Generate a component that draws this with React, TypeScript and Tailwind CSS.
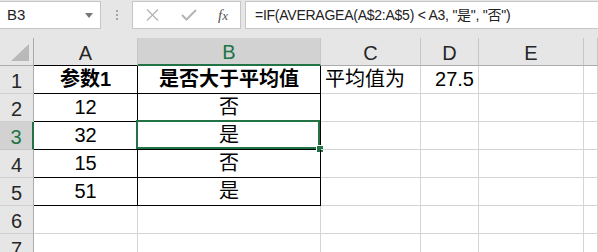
import React from 'react';

type Cell = { text: string; align: 'left' | 'center' | 'right'; bold?: boolean };

const COLS = ['A', 'B', 'C', 'D', 'E', 'F'];
const ROWS = [1, 2, 3, 4, 5, 6, 7];

const cells: Record<string, Cell> = {
  A1: { text: '参数1', align: 'center', bold: true },
  B1: { text: '是否大于平均值', align: 'center', bold: true },
  C1: { text: '平均值为', align: 'left' },
  D1: { text: '27.5', align: 'right' },
  A2: { text: '12', align: 'center' },
  B2: { text: '否', align: 'center' },
  A3: { text: '32', align: 'center' },
  B3: { text: '是', align: 'center' },
  A4: { text: '15', align: 'center' },
  B4: { text: '否', align: 'center' },
  A5: { text: '51', align: 'center' },
  B5: { text: '是', align: 'center' },
};

const font = { fontFamily: '"Liberation Sans", "Noto Sans CJK SC", sans-serif' };

function FormulaBar() {
  return (
    <div className="flex h-[38px] items-start bg-[#e6e6e6] pt-[1px]">
      <div className="relative flex h-[28px] w-[101px] items-center border border-l-0 border-[#c6c6c6] bg-white pl-[7px] text-[15px] text-[#222]">
        B3
        <span className="absolute right-[7px] top-[11px] h-0 w-0 border-x-[4px] border-t-[5px] border-x-transparent border-t-[#777]" />
      </div>
      <div className="flex w-[31px] flex-col items-center gap-[2px] pt-[9px]">
        <span className="h-[2px] w-[2px] bg-[#a5a5a5]" />
        <span className="h-[2px] w-[2px] bg-[#a5a5a5]" />
        <span className="h-[2px] w-[2px] bg-[#a5a5a5]" />
      </div>
      <div className="flex h-[28px] w-[109px] items-center border border-[#c6c6c6] bg-white">
        <svg className="ml-[13px]" width="13" height="12" viewBox="0 0 13 12">
          <path d="M1 0.5 L12 11.5 M12 0.5 L1 11.5" stroke="#b4b4b4" strokeWidth="1.3" fill="none" />
        </svg>
        <svg className="ml-[22px]" width="16" height="12" viewBox="0 0 16 12">
          <path d="M1 6 L5.5 10.5 L15 1" stroke="#b4b4b4" strokeWidth="2" fill="none" />
        </svg>
        <span
          className="ml-[21px] text-[15px] italic text-[#555]"
          style={{ fontFamily: '"Liberation Serif", serif' }}
        >
          f<span className="text-[13px]">x</span>
        </span>
      </div>
      <div className="ml-[4px] flex h-[28px] flex-1 items-center border border-r-0 border-[#c6c6c6] bg-white pl-[9px] text-[14px] tracking-[-0.25px] text-[#222]">
        =IF(AVERAGEA(A$2:A$5) &lt; A3, "是", "否")
      </div>
    </div>
  );
}

function Grid() {
  const inTable = (c: string, r: number) => (c === 'A' || c === 'B') && r >= 1 && r <= 5;
  return (
    <div className="grid grid-cols-[34px_104px_183px_100px_58px_105px_1fr] grid-rows-[28px_repeat(7,28px)]">
      <div className="relative border-b border-r border-[#ababab] bg-[#e6e6e6]">
        <span className="absolute bottom-[4px] right-[4px] h-0 w-0 border-l-[18px] border-l-transparent" style={{ borderBottom: '17px solid #b9b9b9' }} />
      </div>
      {COLS.map((c) => {
        const sel = c === 'B';
        return (
          <div
            key={c}
            className={
              'flex items-center justify-center pt-[2px] text-[20px] ' +
              (sel
                ? 'border-b-2 border-r border-b-[#217346] border-r-[#c6c6c6] bg-[#d2d2d2] text-[#217346]'
                : c === 'A'
                  ? 'border-b border-r border-b-black border-r-[#c6c6c6] bg-[#e6e6e6] text-[#262626]'
                  : 'border-b border-r border-b-[#ababab] border-r-[#c6c6c6] bg-[#e6e6e6] text-[#262626]')
            }
          >
            {c === 'F' ? '' : c}
          </div>
        );
      })}
      {ROWS.map((r) => (
        <React.Fragment key={r}>
          <div
            className={
              'flex items-center justify-center pt-[2px] text-[20px] ' +
              (r === 3
                ? 'border-b border-r-2 border-b-[#c6c6c6] border-r-[#217346] bg-[#d2d2d2] text-[#217346]'
                : 'border-b border-r border-b-[#d0d0d0] border-r-[#ababab] bg-[#e6e6e6] text-[#262626]')
            }
          >
            {r}
          </div>
          {COLS.map((c) => {
            const cell = cells[c + r];
            const black = inTable(c, r);
            return (
              <div
                key={c + r}
                className={
                  'relative flex items-end whitespace-nowrap px-[4px] pb-[1px] text-[20px] leading-[26px] text-black ' +
                  (black ? 'border-b border-r border-black ' : 'border-b border-r border-[#d4d4d4] ') +
                  (cell?.align === 'center' ? 'justify-center ' : cell?.align === 'right' ? 'justify-end ' : 'justify-start ') +
                  (cell?.bold ? 'font-bold' : '')
                }
              >
                {cell?.text}
                {c === 'B' && r === 3 && (
                  <>
                    <span className="pointer-events-none absolute -left-[2px] -top-[2px] bottom-0 right-0 border-2 border-[#217346]" />
                    <span className="absolute left-[178px] top-[23px] h-[8px] w-[8px] border border-white bg-[#217346]" />
                  </>
                )}
              </div>
            );
          })}
        </React.Fragment>
      ))}
    </div>
  );
}

export default function App() {
  return (
    <div className="h-[252px] w-[598px] overflow-hidden bg-white" style={font}>
      <FormulaBar />
      <Grid />
    </div>
  );
}
